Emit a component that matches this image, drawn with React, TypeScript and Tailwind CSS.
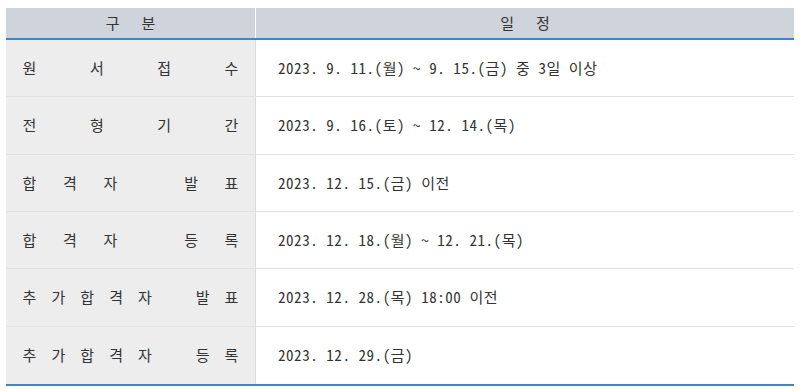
const rows: { label: string[]; date: string }[] = [
  { label: ["원", "서", "접", "수"], date: "2023. 9. 11.(월) ~ 9. 15.(금) 중 3일 이상" },
  { label: ["전", "형", "기", "간"], date: "2023. 9. 16.(토) ~ 12. 14.(목)" },
  { label: ["합", "격", "자", "", "발", "표"], date: "2023. 12. 15.(금) 이전" },
  { label: ["합", "격", "자", "", "등", "록"], date: "2023. 12. 18.(월) ~ 12. 21.(목)" },
  { label: ["추", "가", "합", "격", "자", "", "발", "표"], date: "2023. 12. 28.(목) 18:00 이전" },
  { label: ["추", "가", "합", "격", "자", "", "등", "록"], date: "2023. 12. 29.(금)" },
];

export default function App() {
  return (
    <div
      className="h-[389px] w-[800px] bg-white pl-[6px] pt-[8px] text-[15px] text-[#333]"
      style={{ fontFamily: '"Noto Sans Mono CJK KR", "Noto Sans CJK KR", sans-serif' }}
    >
      <div className="w-[788px]">
        {/* header */}
        <div className="flex h-[32px] border-b-2 border-[#3d85c6] bg-[#cfd3db]">
          <div className="flex w-[250px] items-center justify-center gap-[22px] border-r border-white">
            <span>구</span>
            <span>분</span>
          </div>
          <div className="flex flex-1 items-center justify-center gap-[22px]">
            <span>일</span>
            <span>정</span>
          </div>
        </div>

        {/* body */}
        <div className="grid h-[346px] grid-rows-6 border-b-2 border-[#3d85c6]">
          {rows.map((row, i) => (
            <div
              key={i}
              className={`flex ${i < rows.length - 1 ? "border-b border-[#e2e2e2]" : ""}`}
            >
              <div className="flex w-[250px] items-center justify-between border-r border-[#dadada] bg-[#ededed] pl-[16px] pr-[16px]">
                {row.label.map((ch, j) => (
                  <span key={j} className="inline-block w-[15px] text-center">
                    {ch}
                  </span>
                ))}
              </div>
              <div className="flex flex-1 items-center whitespace-pre pl-[22px] tracking-[0.55px]">
                {row.date}
              </div>
            </div>
          ))}
        </div>
      </div>
    </div>
  );
}
